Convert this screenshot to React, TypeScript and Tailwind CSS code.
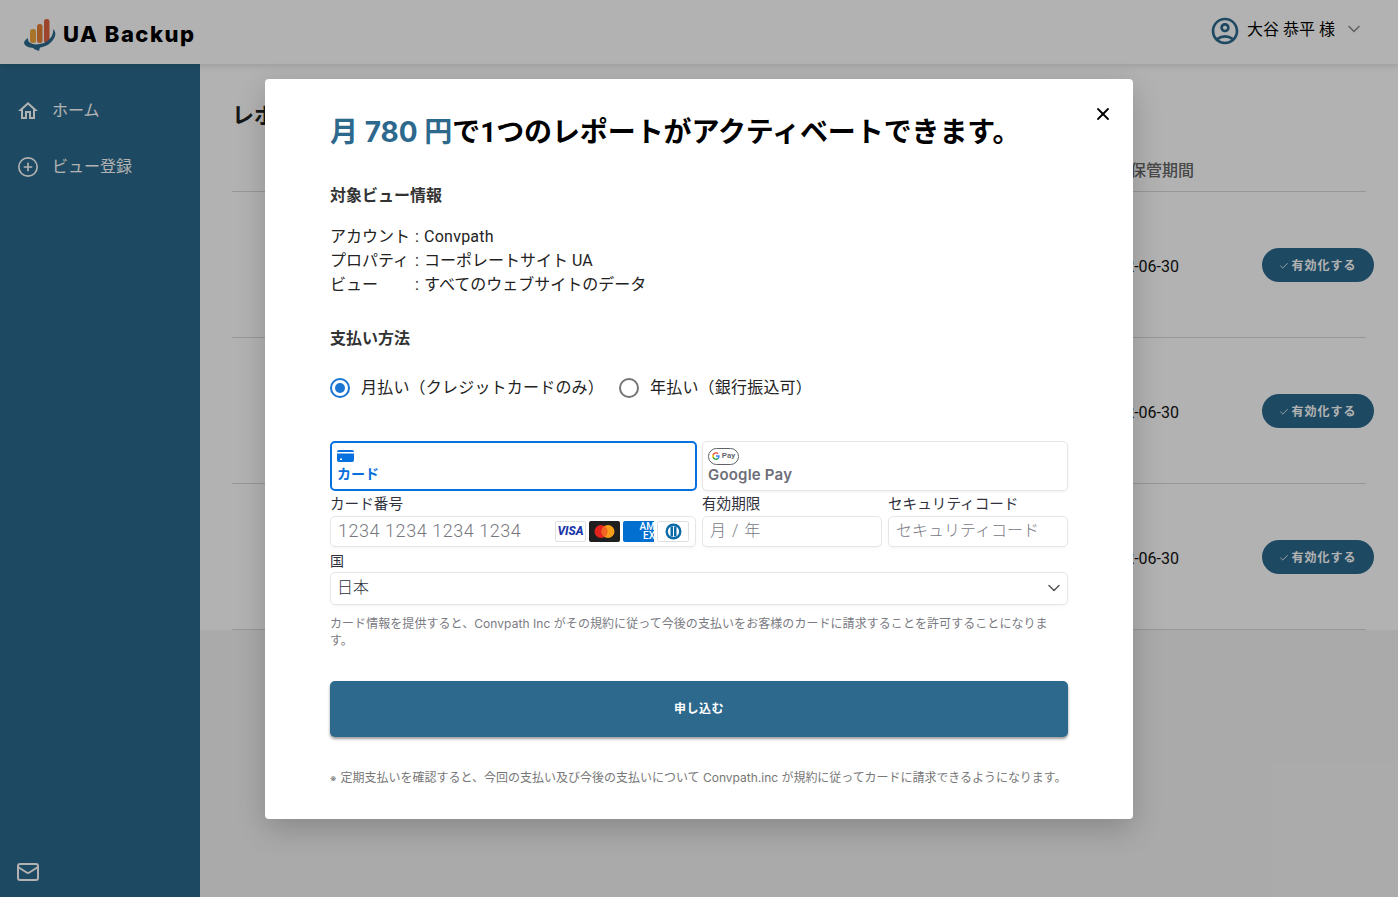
import { ChevronDown, CirclePlus, X, Check, Mail } from "lucide-react";
import { MdOutlineHome, MdOutlineAccountCircle } from "react-icons/md";

const font = "font-['Roboto','Noto_Sans_CJK_JP',sans-serif]";

function Logo() {
  return (
    <svg width="32" height="32" viewBox="0 0 32 32" fill="none">
      <rect x="6" y="10" width="6" height="14" rx="2.5" fill="#f0a63c" />
      <rect x="13" y="5" width="5.500" height="19" rx="2.500" fill="#e67f36" />
      <rect x="20" y="0" width="5.500" height="24" rx="2.500" fill="#e2603f" />
      <path d="M0 24c1 4 6 5 12 5 9 0 17-5 19-12 1-3 0-5-2-7 1 6-3 11-9 14-6 2-12 2-15-1-1-1-1-3-1-4-2 1-4 3-4 5z" fill="#2c698d" />
      <path d="M8 27l8 1-1 4-5-2z" fill="#2c698d" />
    </svg>
  );
}

function ReportRow({ date }: { date: string }) {
  return (
    <div className="flex h-[146px] items-center justify-end border-b border-[#d9d9d9]">
      <span className="mt-[4px] text-base text-[#111]">{date}</span>
      <button className="ml-[83px] -mr-2 flex h-[34px] w-[112px] items-center justify-center gap-[2px] rounded-full bg-[#2c698d] pt-[2px] text-xs font-bold tracking-[1px] text-white">
        <Check size={10} strokeWidth={2} />
        有効化する
      </button>
    </div>
  );
}

function VisaIcon() {
  return (
    <div className="flex h-[21px] w-[31px] items-center justify-center rounded-[2px] border border-[#e0e0e0] bg-white text-xs leading-none font-extrabold text-[#1a35a8] italic">
      VISA
    </div>
  );
}

function MastercardIcon() {
  return (
    <svg width="31" height="21" viewBox="0 0 31 21">
      <rect width="31" height="21" rx="2" fill="#1f1f1f" />
      <circle cx="12" cy="10.500" r="6.500" fill="#e4231f" />
      <circle cx="19" cy="10.500" r="6.500" fill="#f79e1b" />
      <path d="M15.500 5a6.500 6.500 0 0 1 0 11 6.500 6.500 0 0 1 0-11z" fill="#f26522" />
    </svg>
  );
}

function AmexIcon() {
  return (
    <div className="flex h-[21px] w-[31px] flex-col items-end justify-center overflow-hidden rounded-l-[2px] bg-[#016fd0] text-[10px] leading-[9px] font-medium text-white">
      <span className="mr-[-1px]">AM</span>
      <span className="mr-[-1px]">EX</span>
    </div>
  );
}

function DinersIcon() {
  return (
    <div className="flex h-[21px] w-[32px] items-center justify-center rounded-[2px] border border-[#e0e0e0] bg-white">
      <svg width="17" height="17" viewBox="0 0 17 17">
        <circle cx="8.500" cy="8.500" r="8" fill="#0a6aa8" />
        <circle cx="8.500" cy="8.500" r="5.600" fill="#fff" />
        <rect x="5.500" y="3.500" width="2.500" height="10" fill="#0a6aa8" />
        <rect x="9" y="3.500" width="2.500" height="10" fill="#0a6aa8" />
      </svg>
    </div>
  );
}

function GPayIcon() {
  return (
    <div className="flex h-[17px] w-[31px] items-center justify-center gap-[2px] rounded-full border border-[#5f6368] bg-white text-[8px] leading-none text-[#5f6368]">
      <svg width="8" height="8" viewBox="0 0 24 24">
        <path d="M23 12.300c0-.8-.1-1.600-.2-2.300H12v4.400h6.200a5.300 5.300 0 0 1-2.300 3.500v2.900h3.700c2.200-2 3.400-5 3.400-8.500z" fill="#4285f4" />
        <path d="M12 24c3.100 0 5.700-1 7.600-2.800l-3.700-2.900c-1 .7-2.300 1.100-3.900 1.100-3 0-5.500-2-6.400-4.700H1.800v3A12 12 0 0 0 12 24z" fill="#34a853" />
        <path d="M5.600 14.700a7.200 7.200 0 0 1 0-4.600v-3H1.800a12 12 0 0 0 0 10.700z" fill="#fbbc05" />
        <path d="M12 4.800c1.700 0 3.200.6 4.400 1.700l3.300-3.300A12 12 0 0 0 1.800 7.100l3.800 3C6.500 6.800 9 4.800 12 4.800z" fill="#ea4335" />
      </svg>
      Pay
    </div>
  );
}

function Field({ label, placeholder, width, textClass, children }: { label: string; placeholder: string; width: string; textClass: string; children?: React.ReactNode }) {
  return (
    <div className={width}>
      <div className="h-[25px] pt-[3px] text-[14.6px] leading-[20px] text-[#30313d]">{label}</div>
      <div className="flex h-[31px] items-center justify-between rounded-[5px] border border-[#e6e6e6] pr-[6px] pl-[7px] text-[#77787f] shadow-[0_1px_1px_rgba(0,0,0,0.03),0_3px_6px_rgba(0,0,0,0.02)]">
        <span className={`font-light ${textClass}`}>{placeholder}</span>
        {children}
      </div>
    </div>
  );
}

export default function App() {
  return (
    <div className={`relative flex h-[897px] w-[1398px] flex-col overflow-hidden bg-[#f4f4f4] ${font}`}>
      {/* Header */}
      <header className="z-10 flex h-16 shrink-0 items-center bg-white shadow-[0_2px_6px_rgba(0,0,0,0.12)]">
        <div className="flex w-[200px] items-center pt-[6px] pl-[24px]">
          <Logo />
          <span className="ml-[7px] -mt-[2px] font-['Inter'] text-[22px] font-extrabold tracking-[1.5px] text-black">UA Backup</span>
        </div>
        <div className="ml-auto flex items-center pr-[34px] pb-[3px]">
          <MdOutlineAccountCircle size={32} className="text-[#2c698d]" />
          <span className="ml-[6px] -mt-[2px] text-base text-black">大谷 恭平 様</span>
          <ChevronDown size={20} strokeWidth={2} className="ml-[9px] -mt-[4px] text-[#8f8f8f]" />
        </div>
      </header>

      <div className="flex flex-1">
        {/* Sidebar */}
        <aside className="flex w-[200px] shrink-0 flex-col bg-[#2c698d] pt-[35px] pb-[13px] pl-[17px] text-white">
          <div className="flex h-6 items-center gap-[12px] text-base">
            <MdOutlineHome size={24} className="-ml-[1px]" />
            <span>ホーム</span>
          </div>
          <div className="mt-[32px] flex h-6 items-center gap-[13px] text-base">
            <CirclePlus size={22} strokeWidth={1.8} />
            <span>ビュー登録</span>
          </div>
          <Mail size={24} strokeWidth={2} className="mt-auto -ml-[1px]" />
        </aside>

        {/* Main */}
        <main className="flex-1">
          <div className="bg-white pt-[37px] pr-8 pl-8">
            <h1 className="h-[30px] text-[22px] leading-[30px] font-bold text-[#222]">レポート一覧</h1>
            <div className="flex h-[61px] items-end justify-end border-b border-[#d9d9d9] pr-[172px] pb-[8px] text-base font-medium text-[#666]">
              保管期間
            </div>
            <ReportRow date="2022-06-30" />
            <ReportRow date="2022-06-30" />
            <ReportRow date="2022-06-30" />
          </div>
        </main>
      </div>

      {/* Dialog */}
      <div className="absolute inset-0 z-20 flex items-center justify-center bg-black/30">
        <div className="relative h-[740px] w-[868px] rounded-[4px] bg-white px-[65px] pt-[33px] shadow-[0_10px_30px_rgba(0,0,0,0.2)]">
          <button className="absolute top-[25px] right-[20px] text-black">
            <X size={20} strokeWidth={2.2} />
          </button>

          <h2 className="h-[40px] text-[28px] leading-[40px] font-bold text-black">
            <span className="font-['Inter','Noto_Sans_CJK_JP',sans-serif] text-[#2c698d]">月 780 円</span>
            <span className="tracking-[-0.1px]">で1つのレポートがアクティベートできます。</span>
          </h2>

          <h3 className="mt-[32px] text-base leading-6 font-bold text-[#333]">対象ビュー情報</h3>
          <div className="mt-[17px] text-base leading-6 text-[#222]">
            <div className="flex"><span className="w-[85px]">アカウント</span><span className="w-[9px]">:</span><span className="tracking-[0.25px]">Convpath</span></div>
            <div className="flex"><span className="w-[85px]">プロパティ</span><span className="w-[9px]">:</span>コーポレートサイト UA</div>
            <div className="flex"><span className="w-[85px]">ビュー</span><span className="w-[9px]">:</span>すべてのウェブサイトのデータ</div>
          </div>

          <h3 className="mt-[30px] text-base leading-6 font-bold text-[#333]">支払い方法</h3>

          <div className="mt-[25px] flex h-6 items-center text-base tracking-[0.2px] text-[#222]">
            <span className="flex size-5 items-center justify-center rounded-full border-2 border-[#1976d2]">
              <span className="size-[10px] rounded-full bg-[#1976d2]" />
            </span>
            <span className="ml-[11px]">月払い（クレジットカードのみ）</span>
            <span className="ml-[15px] size-5 rounded-full border-2 border-[#757575]" />
            <span className="ml-[11px]">年払い（銀行振込可）</span>
          </div>

          {/* Payment form */}
          <div className="mt-[41px]">
            <div className="flex gap-[5px]">
              <div className="flex h-[50px] w-[367px] flex-col rounded-[5px] border-2 border-[#0570de] pt-[5px] pl-[5px] text-sm font-semibold text-[#0570de]">
                <svg width="17" height="13" viewBox="0 0 17 13" className="mt-[1px]">
                  <path d="M0 3a2 2 0 0 1 2-2h13a2 2 0 0 1 2 2H0zM0 4.500h17V11a2 2 0 0 1-2 2H2a2 2 0 0 1-2-2z" fill="#0570de" />
                  <rect x="3" y="9.500" width="2" height="1.500" fill="#fff" />
                </svg>
                <span className="mt-[3px] leading-[18px]">カード</span>
              </div>
              <div className="flex h-[50px] flex-1 flex-col rounded-[5px] border border-[#e6e6e6] pt-[6px] pl-[5px] text-sm font-semibold text-[#6d6e78] shadow-[0_1px_3px_rgba(0,0,0,0.06)]">
                <GPayIcon />
                <span className="mt-[1px] font-['Inter'] text-[15px] leading-[18px] tracking-[0.2px]">Google Pay</span>
              </div>
            </div>

            <div className="flex gap-[6px]">
              <Field label="カード番号" placeholder="1234 1234 1234 1234" width="w-[366px]" textClass="text-lg tracking-[0.55px]">
                <div className="flex gap-[3px]">
                  <VisaIcon />
                  <MastercardIcon />
                  <AmexIcon />
                  <DinersIcon />
                </div>
              </Field>
              <Field label="有効期限" placeholder="月 / 年" width="w-[180px]" textClass="text-base tracking-[1px]" />
              <Field label="セキュリティコード" placeholder="セキュリティコード" width="w-[180px]" textClass="text-base" />
            </div>

            <div className="h-[25px] pt-[4px] text-sm leading-[20px] text-[#30313d]">国</div>
            <div className="flex h-[33px] items-center justify-between rounded-[5px] border border-[#e6e6e6] pr-[3px] pl-[6px] text-base font-light text-[#30313d] shadow-[0_1px_1px_rgba(0,0,0,0.03),0_3px_6px_rgba(0,0,0,0.02)]">
              日本
              <ChevronDown size={20} strokeWidth={1.8} className="text-[#555]" />
            </div>
            <p className="mt-[10px] pr-[12px] font-['Inter','Noto_Sans_CJK_JP',sans-serif] text-xs leading-[17px] tracking-[0.06px] text-[#7a7a82]">
              カード情報を提供すると、Convpath Inc がその規約に従って今後の支払いをお客様のカードに請求することを許可することになります。
            </p>
          </div>

          <button className="mt-[32px] flex h-[56px] w-full items-center justify-center rounded-[5px] bg-[#2c698d] text-xs font-bold tracking-[0.5px] text-white shadow-[0_2px_3px_rgba(0,0,0,0.4)]">
            申し込む
          </button>

          <p className="mt-[32px] whitespace-nowrap font-['Inter','Noto_Sans_CJK_JP',sans-serif] text-xs leading-[18px] text-[#777]">
            <span className="mr-[4px] text-[10px]">※</span>定期支払いを確認すると、今回の支払い及び今後の支払いについて Convpath.inc <span className="tracking-[-0.04px]">が規約に従ってカードに請求できるようになります。</span>
          </p>
        </div>
      </div>
    </div>
  );
}
